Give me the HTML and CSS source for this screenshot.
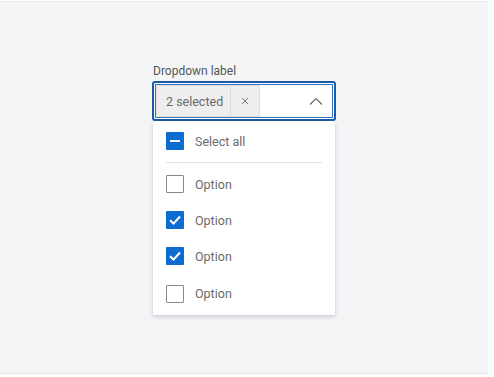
FILE: index.html
```html
<!DOCTYPE html>
<html>
<head>
<meta charset="utf-8">
<link rel="stylesheet" href="styles.css">
</head>
<body>
<div class="frame">
  <div class="dropdown">
    <div class="label">Dropdown label</div>
    <div class="field">
      <div class="tag">
        <span class="tag-text">2 selected</span>
        <span class="tag-x"><svg width="8" height="8" viewBox="0 0 8 8"><path d="M1 1 L7 7 M7 1 L1 7" stroke="#7a7a7a" stroke-width="1"/></svg></span>
      </div>
      <svg class="chev" width="14" height="8" viewBox="0 0 14 8"><path d="M1 7.5 L7 1.5 L13 7.5" fill="none" stroke="#666" stroke-width="1.2"/></svg>
    </div>
    <div class="menu">
      <div class="item">
        <span class="cb on"><svg width="18" height="18" viewBox="0 0 18 18"><rect x="4" y="8" width="10" height="2" fill="#fff"/></svg></span>
        <span class="txt">Select all</span>
      </div>
      <div class="divider"></div>
      <div class="item">
        <span class="cb"></span>
        <span class="txt">Option</span>
      </div>
      <div class="item">
        <span class="cb on"><svg width="18" height="18" viewBox="0 0 18 18"><path d="M4 9.2 L7.5 12.5 L14 5.5" fill="none" stroke="#fff" stroke-width="2"/></svg></span>
        <span class="txt">Option</span>
      </div>
      <div class="item">
        <span class="cb on"><svg width="18" height="18" viewBox="0 0 18 18"><path d="M4 9.2 L7.5 12.5 L14 5.5" fill="none" stroke="#fff" stroke-width="2"/></svg></span>
        <span class="txt">Option</span>
      </div>
      <div class="item last">
        <span class="cb"></span>
        <span class="txt">Option</span>
      </div>
    </div>
  </div>
</div>
</body>
</html>
```
FILE: styles.css
```css
html, body {
  margin: 0;
  padding: 0;
  background: #ffffff;
  font-family: Roboto, "Liberation Sans", sans-serif;
}
.frame {
  width: 488px;
  height: 373px;
  margin-top: 1px;
  background: #f4f5f7;
  border-top: 1px solid #e6e7ea;
  border-bottom: 1px solid #e6e7ea;
  display: flex;
  justify-content: center;
  padding-top: 61px;
  box-sizing: border-box;
}
.dropdown {
  width: 184px;
  display: flex;
  flex-direction: column;
}
.label {
  font-size: 12px;
  color: #555;
  padding-left: 1px;
  height: 18px;
  line-height: 16px;
}
.field {
  height: 40px;
  box-sizing: border-box;
  background: #fff;
  border: 2px solid #1b5aa6;
  border-radius: 3px;
  box-shadow: inset 0 0 0 1px #fff, inset 0 0 0 2px #2d74c8;
  display: flex;
  align-items: center;
  padding: 0 11px 0 2px;
}
.tag {
  height: 32px;
  box-sizing: border-box;
  background: #eeeeee;
  border: 1px solid #dedede;
  border-radius: 2px;
  display: flex;
  align-items: stretch;
  font-size: 12.5px;
  color: #6b6b6b;
}
.tag-text {
  display: flex;
  align-items: center;
  padding: 0 7px 0 9px;
  border-right: 1px solid #dcdcdc;
}
.tag-x {
  width: 28px;
  display: flex;
  align-items: center;
  justify-content: center;
}
.chev {
  margin-left: auto;
}
.menu {
  margin: 0 1px;
  background: #fff;
  box-shadow: 0 2px 5px rgba(40, 50, 80, 0.18), 0 0 1px rgba(0,0,0,0.12);
  padding: 2px 13px 3px 13px;
}
.item {
  height: 36px;
  display: flex;
  align-items: center;
}
.item.last {
  height: 38px;
  padding-top: 1px;
  box-sizing: border-box;
}
.cb {
  width: 18px;
  height: 18px;
  box-sizing: border-box;
  border: 1px solid #8a8a8a;
  border-radius: 1px;
  display: flex;
}
.cb.on {
  border: none;
  background: #0c6ccf;
}
.txt {
  margin-left: 11px;
  font-size: 12.5px;
  color: #6b6b6b;
}
.divider {
  height: 1px;
  background: #e2e2e2;
  margin: 3px 0 3px 0;
}
```
